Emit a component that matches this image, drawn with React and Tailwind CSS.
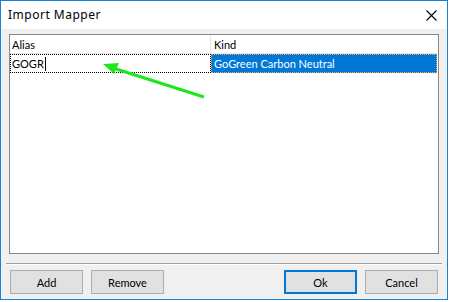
export default function App() {
  const font = { fontFamily: 'Lato, "Noto Sans", "Liberation Sans", sans-serif' };
  const titleFont = { fontFamily: '"Noto Sans", Lato, sans-serif' };
  return (
    <div className="w-[451px] h-[302px] bg-white" style={font}>
      <div className="relative w-[448px] h-[300px] border border-[#1883d7] bg-[#f0f0f0] flex flex-col text-[11px] text-black">
        <div className="h-[28px] bg-white flex items-center justify-between pl-[7px] pr-[10px] shrink-0">
          <span className="text-[12px] leading-none tracking-[0.5px]" style={titleFont}>Import Mapper</span>
          <svg width="11" height="11" viewBox="0 0 11 11">
            <path d="M0.5 0.5 L10.5 10.5 M10.5 0.5 L0.5 10.5" stroke="#000" strokeWidth="1.1" fill="none" />
          </svg>
        </div>
        <div className="mt-[5px] mx-[8px] h-[220px] border border-[#828790] bg-white flex flex-col">
          <div className="flex h-[19px] border-b border-[#e5e5e5]">
            <div className="w-[201px] border-r border-[#e5e5e5] pl-[2px] flex items-center leading-none">Alias</div>
            <div className="flex-1 pl-[3px] flex items-center leading-none">Kind</div>
          </div>
          <div className="flex h-[19px]">
            <div className="w-[201px] border border-dotted border-black flex items-center pl-[1px] leading-none">
              <span>GOGR</span>
              <span className="inline-block w-[1px] h-[14px] bg-black ml-[1px]"></span>
            </div>
            <div className="flex-1 mr-[1px] bg-[#0078d7] border border-dotted border-[#f7a24a] text-white flex items-center pl-[2px] leading-none">
              GoGreen Carbon Neutral
            </div>
          </div>
        </div>
        <div className="mt-[9px] mx-[5px] h-[1px] bg-[#a0a0a0] border-b border-white box-content"></div>
        <div className="mt-[5px] mx-[9px] flex justify-between">
          <div className="flex gap-[8px]">
            <button className="w-[73px] h-[24px] bg-[#e1e1e1] border border-[#adadad] leading-none">Add</button>
            <button className="w-[73px] h-[24px] bg-[#e1e1e1] border border-[#adadad] leading-none">Remove</button>
          </div>
          <div className="flex gap-[8px]">
            <button className="w-[73px] h-[24px] bg-[#e1e1e1] border-2 border-[#0078d7] leading-none">Ok</button>
            <button className="w-[73px] h-[24px] bg-[#e1e1e1] border border-[#adadad] leading-none">Cancel</button>
          </div>
        </div>
        <svg className="absolute left-0 top-0 pointer-events-none" width="448" height="300" viewBox="0 0 448 300">
          <line x1="203" y1="96" x2="112" y2="67" stroke="#1ee61e" strokeWidth="3" strokeLinecap="butt" />
          <polygon points="102,63 118,62 113,73" fill="#1ee61e" />
        </svg>
      </div>
    </div>
  );
}
